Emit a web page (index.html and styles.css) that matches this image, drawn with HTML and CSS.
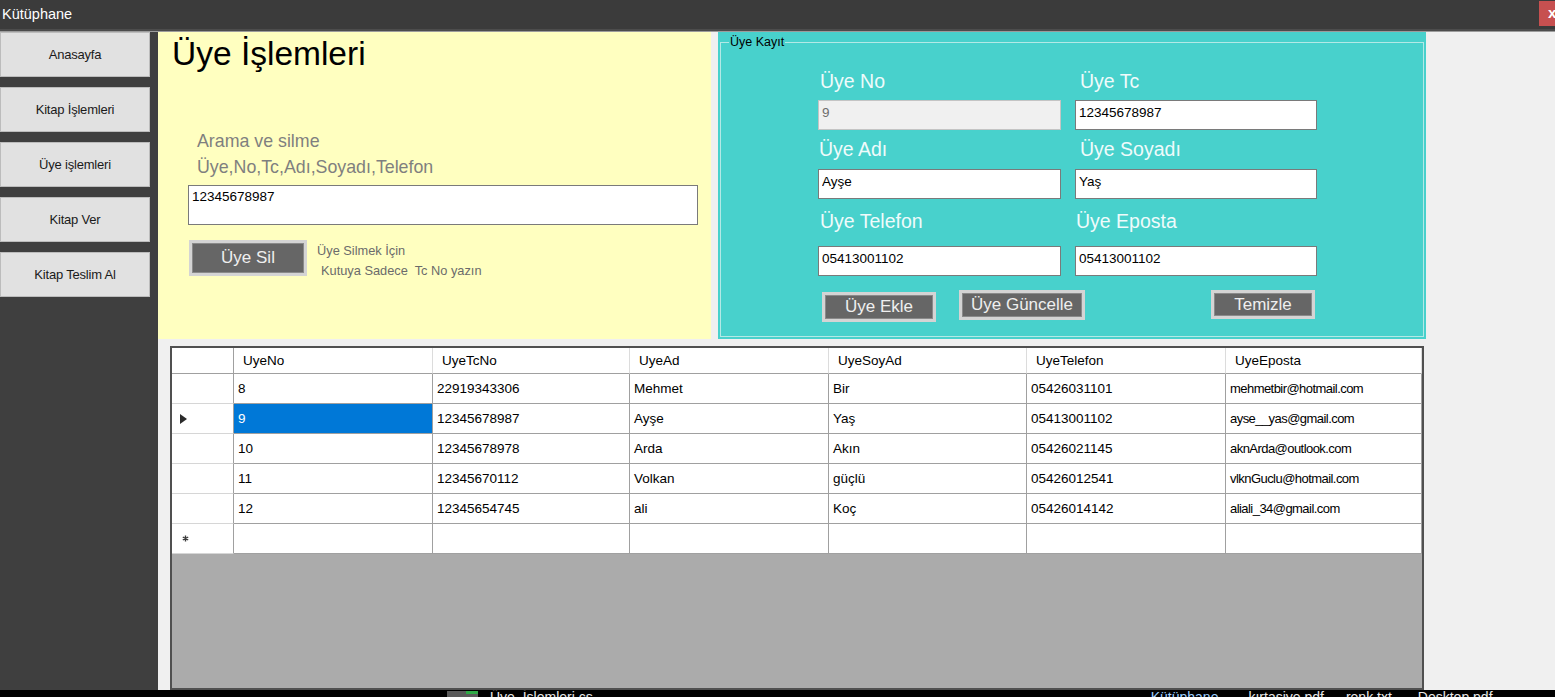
FILE: index.html
```html
<!DOCTYPE html>
<html lang="tr">
<head>
<meta charset="utf-8">
<title>Kütüphane</title>
<link rel="stylesheet" href="styles.css">
</head>
<body>
<div class="window">
  <header class="titlebar">
    <span class="title">Kütüphane</span>
    <span class="close">x</span>
  </header>
  <div class="titleline"></div>
  <div class="main">
    <nav class="sidebar">
      <button class="navbtn">Anasayfa</button>
      <button class="navbtn">Kitap İşlemleri</button>
      <button class="navbtn">Üye işlemleri</button>
      <button class="navbtn">Kitap Ver</button>
      <button class="navbtn">Kitap Teslim Al</button>
    </nav>
    <div class="content">
      <div class="top">
        <section class="panel-search">
          <h1 class="page-title">Üye İşlemleri</h1>
          <div class="search">
            <div class="search-label">Arama ve silme</div>
            <div class="search-label">Üye,No,Tc,Adı,Soyadı,Telefon</div>
            <textarea class="search-box" readonly>12345678987</textarea>
            <div class="delete-row">
              <button class="btn-dark btn-sil">Üye Sil</button>
              <div class="hint">
                <div>Üye Silmek İçin</div>
                <div class="hint-2">Kutuya Sadece&nbsp; Tc No yazın</div>
              </div>
            </div>
          </div>
        </section>
        <section class="panel-form">
          <fieldset class="group">
            <legend class="legend">Üye Kayıt</legend>
            <div class="form">
              <div class="frow lrow lbl-no">
                <span class="flabel">Üye No</span>
                <span class="flabel col2">Üye Tc</span>
              </div>
              <div class="frow in-no">
                <input class="field field-disabled" type="text" value="9" disabled>
                <input class="field" type="text" value="12345678987" readonly>
              </div>
              <div class="frow lrow lbl-ad">
                <span class="flabel flabel-tight">Üye Adı</span>
                <span class="flabel col2">Üye Soyadı</span>
              </div>
              <div class="frow in-ad">
                <input class="field" type="text" value="Ayşe" readonly>
                <input class="field" type="text" value="Yaş" readonly>
              </div>
              <div class="frow lrow lbl-tel">
                <span class="flabel">Üye Telefon</span>
                <span class="flabel col2-tight">Üye Eposta</span>
              </div>
              <div class="frow in-tel">
                <input class="field" type="text" value="05413001102" readonly>
                <input class="field" type="text" value="05413001102" readonly>
              </div>
              <div class="actions">
                <button class="btn-dark btn-ekle">Üye Ekle</button>
                <button class="btn-dark btn-guncelle">Üye Güncelle</button>
                <button class="btn-dark btn-temizle">Temizle</button>
              </div>
            </div>
          </fieldset>
        </section>
      </div>
      <div class="gridview">
        <table class="grid">
          <colgroup>
            <col class="c-rh">
            <col class="c-no">
            <col class="c-tc">
            <col class="c-ad">
            <col class="c-soy">
            <col class="c-tel">
            <col class="c-mail">
          </colgroup>
          <thead>
            <tr>
              <th class="rh"></th>
              <th>UyeNo</th>
              <th>UyeTcNo</th>
              <th>UyeAd</th>
              <th>UyeSoyAd</th>
              <th>UyeTelefon</th>
              <th>UyeEposta</th>
            </tr>
          </thead>
          <tbody>
            <tr>
              <td class="rh"></td>
              <td>8</td><td>22919343306</td><td>Mehmet</td><td>Bir</td><td>05426031101</td><td class="mail">mehmetbir@hotmail.com</td>
            </tr>
            <tr>
              <td class="rh"><svg class="row-arrow" width="7" height="10" viewBox="0 0 7 10"><polygon points="0,0 7,5 0,10" fill="#2b2b2b"/></svg></td>
              <td class="sel">9</td><td>12345678987</td><td>Ayşe</td><td>Yaş</td><td>05413001102</td><td class="mail">ayse__yas@gmail.com</td>
            </tr>
            <tr>
              <td class="rh"></td>
              <td>10</td><td>12345678978</td><td>Arda</td><td>Akın</td><td>05426021145</td><td class="mail">aknArda@outlook.com</td>
            </tr>
            <tr>
              <td class="rh"></td>
              <td>11</td><td>12345670112</td><td>Volkan</td><td>güçlü</td><td>05426012541</td><td class="mail">vlknGuclu@hotmail.com</td>
            </tr>
            <tr>
              <td class="rh"></td>
              <td>12</td><td>12345654745</td><td>ali</td><td>Koç</td><td>05426014142</td><td class="mail">aliali_34@gmail.com</td>
            </tr>
            <tr>
              <td class="rh rh-new"><svg class="row-star" width="7" height="7" viewBox="0 0 7 7"><path d="M3.5 0.5V6.5M0.8 2L6.2 5M0.8 5L6.2 2" stroke="#3a3a3a" stroke-width="1.4"/></svg></td>
              <td></td><td></td><td></td><td></td><td></td><td></td>
            </tr>
          </tbody>
        </table>
      </div>
    </div>
  </div>
  <footer class="taskbar">
    <span class="tb-icon"><span class="tb-icon-green"></span></span>
    <span class="tb-text tb-file">Üye_İşlemleri.cs</span>
    <span class="tb-text tb-kutuphane">Kütüphane</span>
    <span class="tb-text tb-g2">kırtasiye.pdf</span>
    <span class="tb-text tb-g3">renk.txt</span>
    <span class="tb-text tb-g4">Desktop.pdf</span>
  </footer>
</div>
</body>
</html>
```

FILE: styles.css
```css
* {
  box-sizing: border-box;
}

body {
  margin: 0;
  width: 1555px;
  height: 697px;
  overflow: hidden;
  background: #f0f0f0;
  font-family: "Liberation Sans", Arial, sans-serif;
}

.window {
  display: flex;
  flex-direction: column;
  height: 697px;
}

/* title bar */
.titlebar {
  height: 29px;
  background: #3b3b3b;
  display: flex;
  justify-content: space-between;
  align-items: flex-start;
  color: #ffffff;
}

.title {
  font-size: 14.5px;
  line-height: 16px;
  padding: 6px 0 0 2px;
}

.close {
  width: 16px;
  height: 25px;
  margin-top: 1px;
  background: #c75050;
  color: #ffffff;
  font-size: 15px;
  font-weight: bold;
  line-height: 24px;
  padding-left: 9px;
  overflow: hidden;
}

.titleline {
  height: 3px;
  background: linear-gradient(#4c4c4c 0 2px, #9c9c9c 2px 3px);
}

/* main */
.main {
  display: flex;
  height: 658px;
}

.sidebar {
  width: 158px;
  flex-shrink: 0;
  background: #3f3f3f;
  display: flex;
  flex-direction: column;
  gap: 10px;
}

.navbtn {
  width: 150px;
  height: 45px;
  padding: 0;
  background: #e1e1e1;
  border: 1px solid #bcbcbc;
  font-family: "Liberation Sans", Arial, sans-serif;
  font-size: 13px;
  letter-spacing: -0.2px;
  color: #1a1a1a;
}

.content {
  flex: 1;
  display: flex;
  flex-direction: column;
  min-width: 0;
}

.top {
  display: flex;
  gap: 7px;
  height: 307px;
}

/* yellow search panel */
.panel-search {
  width: 553px;
  background: #ffffc0;
  display: flex;
  flex-direction: column;
}

.page-title {
  margin: 0;
  padding: 3px 0 0 14px;
  font-size: 33.5px;
  line-height: 38px;
  font-weight: normal;
  color: #000000;
}

.search {
  margin-top: 55px;
  padding-left: 30px;
  display: flex;
  flex-direction: column;
  align-items: flex-start;
}

.search-label {
  padding-left: 9px;
  font-size: 17.8px;
  line-height: 26px;
  color: #7f7f7f;
  white-space: nowrap;
}

.search-box {
  display: block;
  width: 510px;
  height: 40px;
  margin: 5px 0 0 0;
  padding: 3px 3px;
  border: 1px solid #7a7a7a;
  background: #ffffff;
  resize: none;
  overflow: hidden;
  font-family: "Liberation Sans", Arial, sans-serif;
  font-size: 13.5px;
  line-height: 16px;
  color: #000000;
  outline: none;
}

.delete-row {
  display: flex;
  align-items: flex-start;
  margin: 15px 0 0 1px;
}

.btn-dark {
  padding: 0;
  border: 3px solid #d4d4d4;
  box-shadow: inset 0 0 0 1px #8a8a8a;
  background: #666666;
  color: #efefef;
  font-family: "Liberation Sans", Arial, sans-serif;
  font-size: 17px;
  line-height: 20px;
  white-space: nowrap;
}

.btn-sil {
  width: 118px;
  height: 36px;
}

.hint {
  margin: 1px 0 0 10px;
  font-size: 12.8px;
  line-height: 20px;
  color: #6b6b6b;
  white-space: nowrap;
}

.hint-2 {
  padding-left: 4px;
}

/* cyan form panel */
.panel-form {
  width: 708px;
  background: #48d1cc;
  display: flex;
  flex-direction: column;
}

.group {
  flex: 1;
  min-width: 0;
  margin: 3px 2px 2px 2px;
  padding: 0;
  border: 1px solid #b3e9e6;
}

.legend {
  margin-left: 8px;
  padding: 0 1px;
  font-size: 12.5px;
  line-height: 14px;
  color: #000000;
}

.form {
  padding: 19.5px 0 0 97px;
  display: flex;
  flex-direction: column;
}

.frow {
  display: grid;
  grid-template-columns: 243px 242px;
  column-gap: 14px;
}

.lrow {
  height: 24px;
}

.flabel {
  padding-left: 2px;
  font-size: 19.5px;
  line-height: 24px;
  color: #effbfb;
  white-space: nowrap;
}

.flabel-tight {
  padding-left: 1px;
}

.col2 {
  padding-left: 5px;
}

.col2-tight {
  padding-left: 1px;
}

.in-no {
  margin-top: 7.5px;
}

.lbl-ad {
  margin-top: 6.5px;
}

.in-ad {
  margin-top: 8.5px;
}

.lbl-tel {
  margin-top: 9.5px;
}

.in-tel {
  margin-top: 13.5px;
}

.field {
  display: block;
  width: 100%;
  height: 30px;
  margin: 0;
  padding: 3px 3px 9px 3px;
  border: 1px solid #7a7a7a;
  background: #ffffff;
  font-family: "Liberation Sans", Arial, sans-serif;
  font-size: 13.5px;
  line-height: 16px;
  color: #000000;
  outline: none;
}

.field-disabled {
  background: #f0f0f0;
  border-color: #c4c4c4;
  color: #6d6d6d;
}

.actions {
  display: flex;
  align-items: flex-start;
  margin-top: 14px;
}

.btn-ekle {
  width: 114px;
  height: 30px;
  margin: 2px 0 0 4px;
}

.btn-guncelle {
  width: 126px;
  height: 30px;
  margin-left: 23px;
}

.btn-temizle {
  width: 104px;
  height: 29px;
  margin-left: 126px;
}

/* data grid */
.gridview {
  width: 1254px;
  height: 344px;
  margin: 7px 0 0 12px;
  border: 2px solid #505050;
  background: #ababab;
  overflow: hidden;
}

.grid {
  width: 1250px;
  table-layout: fixed;
  border-collapse: separate;
  border-spacing: 0;
  font-size: 13.5px;
  color: #000000;
}

.c-rh { width: 62px; }
.c-no { width: 199px; }
.c-tc { width: 197px; }
.c-ad { width: 199px; }
.c-soy { width: 198px; }
.c-tel { width: 199px; }
.c-mail { width: 196px; }

.grid th,
.grid td {
  background: #ffffff;
  border-right: 1px solid #a0a0a0;
  border-bottom: 1px solid #a0a0a0;
  padding: 0 0 0 4px;
  text-align: left;
  white-space: nowrap;
  overflow: hidden;
  vertical-align: middle;
}

.grid th {
  height: 26px;
  padding-left: 9px;
  font-weight: normal;
  border-right-color: #dcdcdc;
}

.grid td {
  height: 30px;
}

.grid td.mail {
  font-size: 13px;
  letter-spacing: -0.55px;
}

.grid .rh {
  padding-left: 8px;
  border-bottom-color: #d6d6d6;
  border-right-color: #a0a0a0;
}

.grid thead .rh {
  border-bottom-color: #a0a0a0;
}

.grid .rh-new {
  padding-left: 10px;
}

.row-arrow,
.row-star {
  display: block;
}

.grid td.sel {
  background: #0078d7;
  color: #ffffff;
}

/* taskbar */
.taskbar {
  height: 7px;
  background: #000000;
  display: flex;
  align-items: flex-start;
  overflow: hidden;
  color: #e8e8e8;
  font-size: 14px;
  line-height: 14px;
}

.tb-icon {
  width: 31px;
  height: 7px;
  margin-left: 447px;
  margin-top: 1px;
  background: #5a5a5a;
  display: flex;
  justify-content: flex-end;
}

.tb-icon-green {
  width: 12px;
  height: 3px;
  background: #2faa46;
}

.tb-text {
  white-space: nowrap;
}

.tb-file {
  margin-left: 12px;
}

.tb-kutuphane {
  margin-left: 558px;
  color: #9fd0ff;
}

.tb-g2 {
  margin-left: 30px;
}

.tb-g3 {
  margin-left: 22px;
}

.tb-g4 {
  margin-left: 26px;
}
```
